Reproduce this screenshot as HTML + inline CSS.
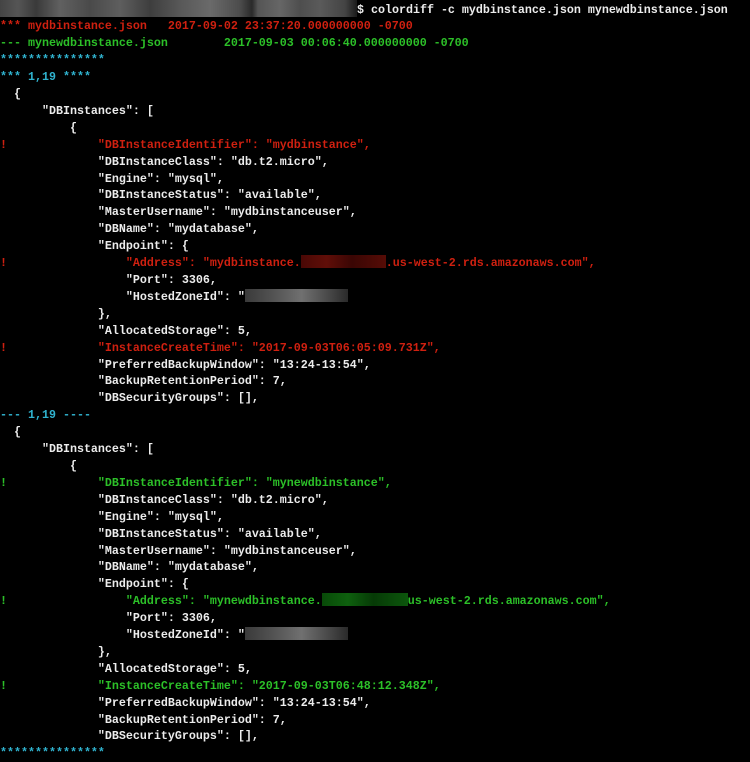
<!DOCTYPE html>
<html><head><meta charset="utf-8"><style>
html,body{margin:0;padding:0;background:#000;width:750px;height:762px;overflow:hidden}
pre{margin:0;position:absolute;left:0;top:-0.5px;font-family:"Liberation Mono",monospace;font-size:11.67px;line-height:16.9px;color:#ececec;font-weight:bold;-webkit-font-smoothing:antialiased}
.r{color:#cf2010}.g{color:#2cc028}.c{color:#30b3cf}
.b{display:inline-block;height:13px;vertical-align:-2px}
.top{width:357px;height:17px;vertical-align:-4px;background:linear-gradient(90deg,#444 0,#555 18px,#3a3a3a 36px,#606060 60px,#4a4a4a 90px,#5e5e5e 120px,#3e3e3e 150px,#585858 180px,#6a6a6a 210px,#4c4c4c 240px,#2a2a2a 252px,#555 258px,#666 280px,#4e4e4e 300px,#5a5a5a 320px,#444 345px,#1a1a1a 357px)}
.rb{width:85px;background:linear-gradient(90deg,#4a0805,#600e08 30%,#3a0604 60%,#560c06)}
.gb{width:86px;background:linear-gradient(90deg,#084a08,#0e600e 30%,#063a06 60%,#0c560c)}
.hz{width:103px;background:linear-gradient(90deg,#3a3a3a,#555 30%,#707070 55%,#4a4a4a 80%,#2a2a2a)}
</style></head><body><pre><span class="b top"></span>$ colordiff -c mydbinstance.json mynewdbinstance.json
<span class="r">*** mydbinstance.json   2017-09-02 23:37:20.000000000 -0700</span>
<span class="g">--- mynewdbinstance.json        2017-09-03 00:06:40.000000000 -0700</span>
<span class="c">***************</span>
<span class="c">*** 1,19 ****</span>
  {
      "DBInstances": [
          {
<span class="r">!             "DBInstanceIdentifier": "mydbinstance",</span>
              "DBInstanceClass": "db.t2.micro",
              "Engine": "mysql",
              "DBInstanceStatus": "available",
              "MasterUsername": "mydbinstanceuser",
              "DBName": "mydatabase",
              "Endpoint": {
<span class="r">!                 "Address": "mydbinstance.<span class="b rb"></span>.us-west-2.rds.amazonaws.com",</span>
                  "Port": 3306,
                  "HostedZoneId": "<span class="b hz"></span>
              },
              "AllocatedStorage": 5,
<span class="r">!             "InstanceCreateTime": "2017-09-03T06:05:09.731Z",</span>
              "PreferredBackupWindow": "13:24-13:54",
              "BackupRetentionPeriod": 7,
              "DBSecurityGroups": [],
<span class="c">--- 1,19 ----</span>
  {
      "DBInstances": [
          {
<span class="g">!             "DBInstanceIdentifier": "mynewdbinstance",</span>
              "DBInstanceClass": "db.t2.micro",
              "Engine": "mysql",
              "DBInstanceStatus": "available",
              "MasterUsername": "mydbinstanceuser",
              "DBName": "mydatabase",
              "Endpoint": {
<span class="g">!                 "Address": "mynewdbinstance.<span class="b gb"></span>us-west-2.rds.amazonaws.com",</span>
                  "Port": 3306,
                  "HostedZoneId": "<span class="b hz"></span>
              },
              "AllocatedStorage": 5,
<span class="g">!             "InstanceCreateTime": "2017-09-03T06:48:12.348Z",</span>
              "PreferredBackupWindow": "13:24-13:54",
              "BackupRetentionPeriod": 7,
              "DBSecurityGroups": [],
<span class="c">***************</span></pre></body></html>
